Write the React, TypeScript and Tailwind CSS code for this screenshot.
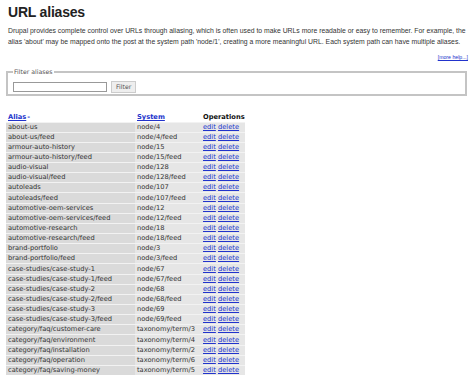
const rows: [string, string][] = [
  ["about-us", "node/4"],
  ["about-us/feed", "node/4/feed"],
  ["armour-auto-history", "node/15"],
  ["armour-auto-history/feed", "node/15/feed"],
  ["audio-visual", "node/128"],
  ["audio-visual/feed", "node/128/feed"],
  ["autoleads", "node/107"],
  ["autoleads/feed", "node/107/feed"],
  ["automotive-oem-services", "node/12"],
  ["automotive-oem-services/feed", "node/12/feed"],
  ["automotive-research", "node/18"],
  ["automotive-research/feed", "node/18/feed"],
  ["brand-portfolio", "node/3"],
  ["brand-portfolio/feed", "node/3/feed"],
  ["case-studies/case-study-1", "node/67"],
  ["case-studies/case-study-1/feed", "node/67/feed"],
  ["case-studies/case-study-2", "node/68"],
  ["case-studies/case-study-2/feed", "node/68/feed"],
  ["case-studies/case-study-3", "node/69"],
  ["case-studies/case-study-3/feed", "node/69/feed"],
  ["category/faq/customer-care", "taxonomy/term/3"],
  ["category/faq/environment", "taxonomy/term/4"],
  ["category/faq/installation", "taxonomy/term/2"],
  ["category/faq/operation", "taxonomy/term/6"],
  ["category/faq/saving-money", "taxonomy/term/5"],
];

export default function App() {
  return (
    <div className="w-[474px] h-[375px] overflow-hidden bg-white px-[6px] pt-[3px] font-['Liberation_Sans',Arial,sans-serif]">
      <h1 className="pl-[2px] text-[14px] leading-[18px] font-bold tracking-[-0.2px] text-[#222]">URL aliases</h1>

      <p className="mt-[4px] -mr-[4px] pl-[2px] text-[6.85px] leading-[11px] text-[#333]">
        Drupal provides complete control over URLs through aliasing, which is often used to make URLs more readable or easy to remember. For example, the alias 'about' may be mapped onto the post at the system path 'node/1', creating a more meaningful URL. Each system path can have multiple aliases.
      </p>

      <div className="mt-[7px] flex justify-end">
        <a className="text-[5.2px] leading-[6px] text-[#2233cc] underline">[more help...]</a>
      </div>

      <fieldset className="mt-[8px] mr-[1px] h-[28px] border-2 border-[#c4c4c4] px-[5px] pt-0 font-['DejaVu_Sans',Verdana,sans-serif]">
        <legend className="px-[1px] text-[6.2px] leading-[8px] text-[#555]">Filter aliases</legend>
        <div className="mt-[5px] flex items-center gap-[4px]">
          <input className="h-[10px] w-[94px] border border-[#999] bg-white" />
          <button className="h-[12px] border border-[#ccc] bg-[#eee] px-[4px] text-[6.2px] leading-[10px] text-[#555]">Filter</button>
        </div>
      </fieldset>

      <table className="mt-[17px] border-collapse text-[6.7px] text-[#333] font-['DejaVu_Sans',Verdana,sans-serif]">
        <thead>
          <tr className="h-[9px] text-left">
            <th className="w-[129px] pl-[2px] py-0 leading-[8px] font-bold">
              <a className="text-[#2233cc] underline">Alias</a>
              <span className="ml-[1px] text-[#2233cc]">-</span>
            </th>
            <th className="w-[66px] pl-[2px] py-0 leading-[8px] font-bold">
              <a className="text-[#2233cc] underline">System</a>
            </th>
            <th className="w-[44px] pl-[2px] py-0 leading-[8px] font-bold text-[#111]">Operations</th>
          </tr>
        </thead>
        <tbody>
          {rows.map(([alias, system]) => (
            <tr key={alias} className="h-[10.15px] border-t border-[#f2f2f2]">
              <td className="bg-[#dadada] pl-[2px] py-0 leading-[9px] whitespace-nowrap">{alias}</td>
              <td className="bg-[#e6e6e6] pl-[2px] py-0 leading-[9px] whitespace-nowrap">{system}</td>
              <td className="bg-[#e6e6e6] pl-[2px] py-0 leading-[9px] whitespace-nowrap">
                <a className="text-[#2233cc] underline">edit</a>{" "}
                <a className="text-[#2233cc] underline">delete</a>
              </td>
            </tr>
          ))}
        </tbody>
      </table>
    </div>
  );
}
